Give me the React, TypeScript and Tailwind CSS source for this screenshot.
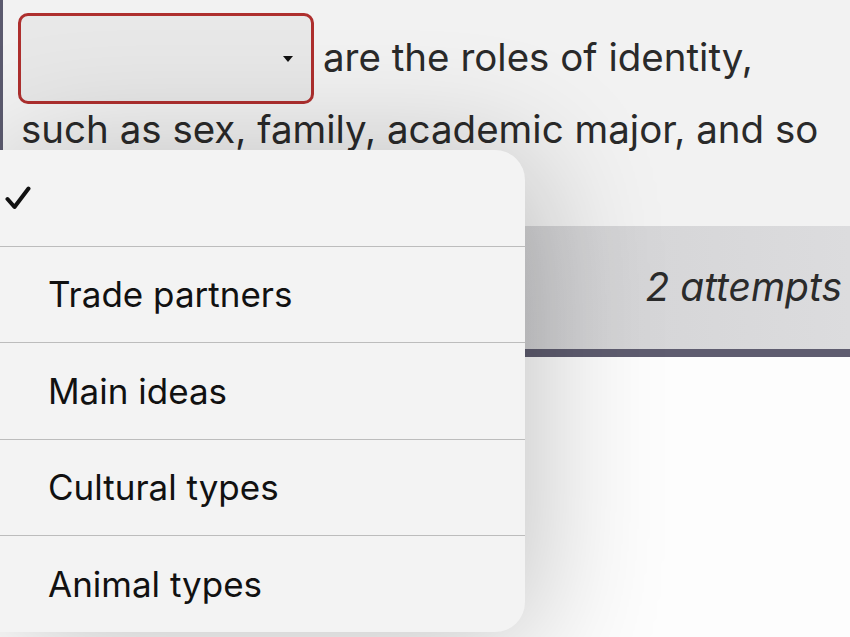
import React from "react";

const items = ["Trade partners", "Main ideas", "Cultural types", "Animal types"];

export default function App() {
  return (
    <div
      className="relative w-[850px] h-[637px] overflow-hidden bg-[#fdfdfd] text-[#2a2a2a]"
      style={{ fontFamily: "Inter, 'Noto Sans', sans-serif" }}
    >
      {/* Card */}
      <div className="flex flex-col">
        <div className="h-[226px] bg-[#f2f2f2] border-l-[3px] border-[#5b5a6e] pl-[15px] pt-[13px]">
          <div className="flex items-center">
            <div className="relative w-[296px] h-[91px] border-[3px] border-[#ae2f2e] rounded-[10px] bg-[#e8e8e8]">
              <svg
                className="absolute left-[262px] top-[40px]"
                width="10"
                height="6"
                viewBox="0 0 10 6"
              >
                <polygon points="0,0 10,0 5,6" fill="#111" />
              </svg>
            </div>
            <span className="ml-[9px] pb-[3px] text-[38.5px] leading-none">
              are the roles of identity,
            </span>
          </div>
          <div className="mt-[3px] ml-[3px] text-[38.5px] leading-[44px]">
            such as sex, family, academic major, and so
          </div>
        </div>
        <div className="h-[123px] bg-gradient-to-r from-[#c3c3c5] to-[#dcdcde] flex items-center justify-end pr-[8px]">
          <span className="italic text-[39px] text-[#2b2b2b]">2 attempts</span>
        </div>
        <div className="h-[8px] bg-[#5f5d70]" />
      </div>

      {/* Dropdown menu */}
      <div className="absolute left-0 top-[150px] w-[525px] h-[482px] bg-[#f3f3f3] rounded-r-[30px] shadow-[10px_10px_130px_rgba(0,0,0,0.24)] flex flex-col text-[#111]">
        <div className="h-[96px] flex items-center pl-[5px]">
          <svg width="26" height="24" viewBox="0 0 26 24">
            <path
              d="M2.5 13 L9.5 21 L23.5 2.5"
              fill="none"
              stroke="#111"
              strokeWidth="4"
              strokeLinecap="round"
              strokeLinejoin="round"
            />
          </svg>
        </div>
        {items.map((t) => (
          <div
            key={t}
            className="h-[97px] border-t border-[#bcbcbc] flex items-center pl-[48px] text-[35px]"
          >
            {t}
          </div>
        ))}
      </div>
    </div>
  );
}
